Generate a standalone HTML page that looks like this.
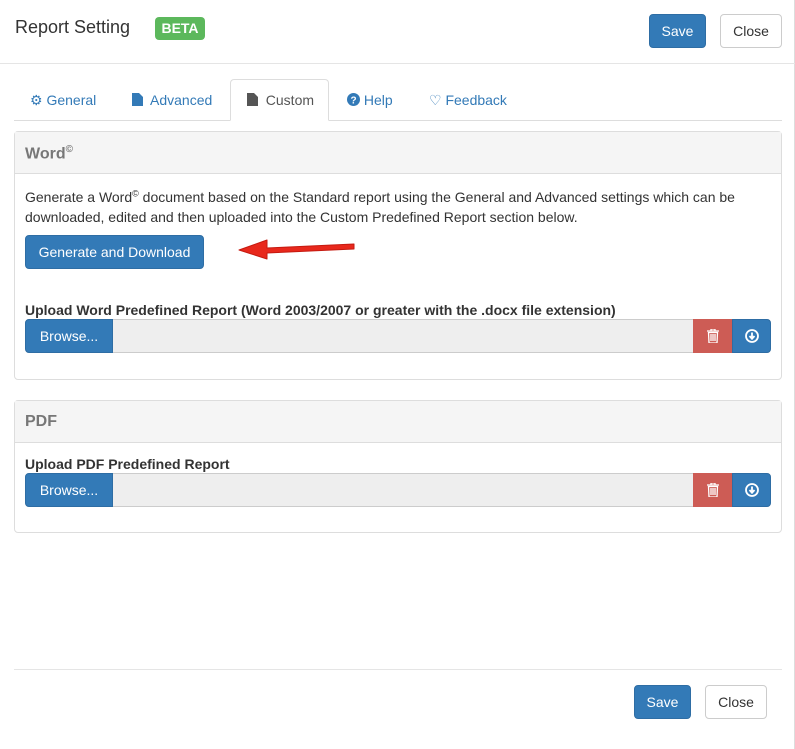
<!DOCTYPE html><html><head><style>
*{box-sizing:border-box}body{margin:0;width:795px;height:749px;background:#fff;font-family:"Liberation Sans",sans-serif;font-size:14px;color:#333;position:relative;overflow:hidden}
.a{position:absolute}
.btn{position:absolute;border-radius:4px;display:flex;align-items:center;justify-content:center;font-size:14px}
.pri{background:#337ab7;border:1px solid #2e6da4;color:#fff}
.def{background:#fff;border:1px solid #ccc;color:#333}
.panel{position:absolute;left:14px;width:768px;border:1px solid #ddd;border-radius:4px;background:#fff}
.ph{background:#f5f5f5;border-bottom:1px solid #ddd;height:42px;padding:12px 10px;font-weight:bold;font-size:16px;color:#777}
.ig{position:absolute;left:10px;width:746px;height:34px;background:#eee;border:1px solid #ccc;border-radius:4px}
.tab{position:absolute;top:92px;color:#337ab7;font-size:14px}
.tr{background:#cd5c55}
</style></head><body>
<div class="a" style="left:794px;top:0;width:1px;height:749px;background:#ddd"></div>
<div class="a" style="left:15px;top:17px;font-size:18px;">Report Setting</div>
<div class="a" style="left:155px;top:17px;width:50px;height:23px;background:#5cb85c;border-radius:4px;color:#fff;font-weight:bold;font-size:14px;text-align:center;line-height:23px">BETA</div>
<div class="btn pri" style="left:649px;top:14px;width:57px;height:34px">Save</div>
<div class="btn def" style="left:720px;top:14px;width:62px;height:34px">Close</div>
<div class="a" style="left:0;top:63px;width:795px;height:1px;background:#e5e5e5"></div>
<div class="a" style="left:14px;top:120px;width:768px;height:1px;background:#ddd"></div>
<div class="a" style="left:230px;top:79px;width:99px;height:42px;border:1px solid #ddd;border-bottom-color:#fff;border-radius:4px 4px 0 0;background:#fff"></div>
<div class="tab" style="left:30px">⚙ General</div>
<div class="tab" style="left:132px"><svg width="11" height="13" style="vertical-align:-1px"><path d="M0 0H7L11 4V13H0Z" fill="#337ab7"/></svg>&nbsp; Advanced</div>
<div class="tab" style="left:247px;color:#555"><svg width="11" height="13" style="vertical-align:-1px"><path d="M0 0H7L11 4V13H0Z" fill="#555"/></svg>&nbsp; Custom</div>
<div class="tab" style="left:347px"><svg width="13" height="13" style="vertical-align:-1px"><circle cx="6.5" cy="6.5" r="6.5" fill="#337ab7"/><text x="6.5" y="10.5" font-size="10" font-weight="bold" fill="#fff" text-anchor="middle" font-family="Liberation Sans">?</text></svg> Help</div>
<div class="tab" style="left:429px">♡ Feedback</div>

<div class="panel" style="top:131px;height:249px">
<div class="ph">Word<sup style="font-size:10px">©</sup></div>
<div class="a" style="left:10px;top:55px;line-height:20px;width:740px">Generate a Word<sup style="font-size:9px;line-height:0">©</sup> document based on the Standard report using the General and Advanced settings which can be downloaded, edited and then uploaded into the Custom Predefined Report section below.</div>
<div class="btn pri" style="left:10px;top:103px;width:179px;height:34px">Generate and Download</div>
<svg class="a" style="left:222px;top:102px" width="120" height="30"><path d="M117 10 L30 14 L30 6 L2 16 L30 25 L30 19 L117 15 Z" fill="#e8281c" stroke="#c51a10" stroke-width="1" stroke-linejoin="round"/></svg>
<div class="a" style="left:10px;top:170px;font-weight:bold">Upload Word Predefined Report (Word 2003/2007 or greater with the .docx file extension)</div>
<div class="ig" style="top:187px"></div>
<div class="btn pri" style="left:10px;top:187px;width:88px;height:34px;border-radius:4px 0 0 4px">Browse...</div>
<div class="btn tr" style="left:678px;top:187px;width:40px;height:34px;border-radius:0;color:#fff"><svg width="12" height="14"><path d="M0 2H12M4 2V0H8V2M1.5 3.5H10.5L10 14H2Z M4 5V12M6 5V12M8 5V12" stroke="#fff" fill="none" stroke-width="1.3"/></svg></div>
<div class="btn pri" style="left:717px;top:187px;width:39px;height:34px;border-radius:0 4px 4px 0"><svg width="14" height="14"><circle cx="7" cy="7" r="6" stroke="#fff" stroke-width="1.8" fill="none"/><path d="M7 3.5V9M4.5 7L7 9.8L9.5 7" stroke="#fff" stroke-width="1.8" fill="none"/></svg></div>
</div>

<div class="panel" style="top:400px;height:133px">
<div class="ph">PDF</div>
<div class="a" style="left:10px;top:55px;font-weight:bold">Upload PDF Predefined Report</div>
<div class="ig" style="top:72px"></div>
<div class="btn pri" style="left:10px;top:72px;width:88px;height:34px;border-radius:4px 0 0 4px">Browse...</div>
<div class="btn tr" style="left:678px;top:72px;width:40px;height:34px;border-radius:0;color:#fff"><svg width="12" height="14"><path d="M0 2H12M4 2V0H8V2M1.5 3.5H10.5L10 14H2Z M4 5V12M6 5V12M8 5V12" stroke="#fff" fill="none" stroke-width="1.3"/></svg></div>
<div class="btn pri" style="left:717px;top:72px;width:39px;height:34px;border-radius:0 4px 4px 0"><svg width="14" height="14"><circle cx="7" cy="7" r="6" stroke="#fff" stroke-width="1.8" fill="none"/><path d="M7 3.5V9M4.5 7L7 9.8L9.5 7" stroke="#fff" stroke-width="1.8" fill="none"/></svg></div>
</div>

<div class="a" style="left:14px;top:669px;width:768px;height:1px;background:#e5e5e5"></div>
<div class="btn pri" style="left:634px;top:685px;width:57px;height:34px">Save</div>
<div class="btn def" style="left:705px;top:685px;width:62px;height:34px">Close</div>
</body></html>
